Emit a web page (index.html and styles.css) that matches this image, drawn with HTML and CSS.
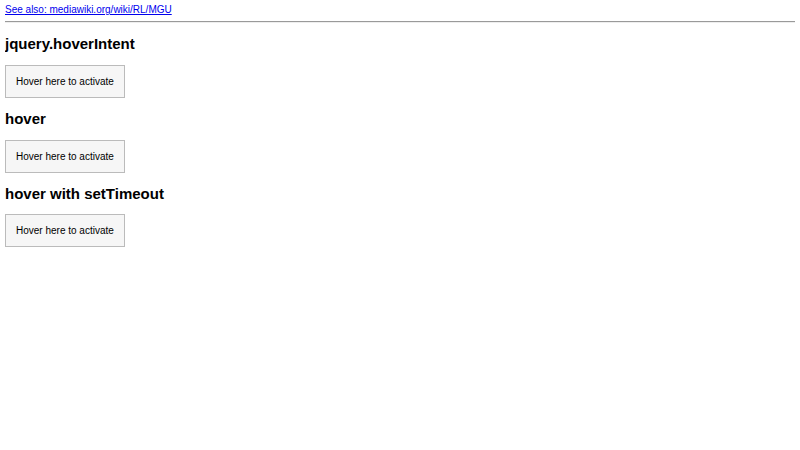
FILE: index.html
```html
<!DOCTYPE html>
<html lang="en">
<head>
    <meta charset="UTF-8">
    <title>hoverIntent test</title>
    <link rel="stylesheet" href="styles.css">
</head>
<body>
    <p class="see-also"><a href="https://www.mediawiki.org/wiki/RL/MGU">See also: mediawiki.org/wiki/RL/MGU</a></p>
    <hr>

    <h2>jquery.hoverIntent</h2>
    <div class="hover-box" id="box-intent">Hover here to activate</div>

    <h2>hover</h2>
    <div class="hover-box" id="box-hover">Hover here to activate</div>

    <h2>hover with setTimeout</h2>
    <div class="hover-box" id="box-timeout">Hover here to activate</div>
</body>
</html>
```

FILE: styles.css
```css
body
{
    margin: 4px 5px;
    font-family: "Liberation Sans", Arial, sans-serif;
    font-size: 10px;
    color: #000;
    background: #fff;
}
.see-also
{
    margin: 0;
    line-height: 12px;
}
.see-also a
{
    color: #0000ee;
}
hr
{
    margin: 5px 0 0;
    border: 0;
    border-top: 1px solid #9a9a9a;
    border-bottom: 1px solid #eee;
}
h2
{
    font-size: 15px;
    line-height: 18px;
    margin: 12.25px 0 11.5px;
}
.hover-box
{
    width: fit-content;
    padding: 9px 10px;
    line-height: 13px;
    background: #f6f6f6;
    border: 1px solid #bbb;
}
```
